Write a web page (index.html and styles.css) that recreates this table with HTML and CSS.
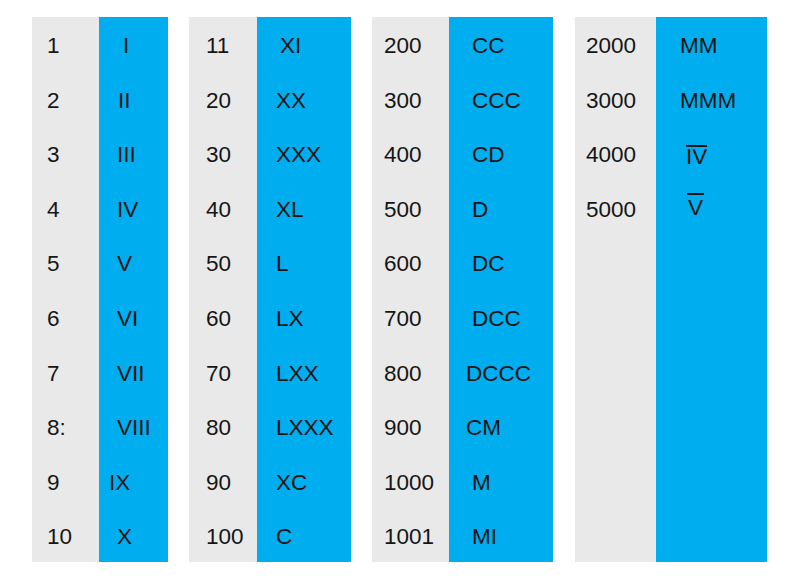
FILE: index.html
```html
<!DOCTYPE html>
<html>
<head>
<meta charset="utf-8">
<link rel="stylesheet" href="styles.css">
</head>
<body>
<div class="board">
  <div class="group g1">
    <div class="strip nums">
      <div class="cell">1</div><div class="cell">2</div><div class="cell">3</div><div class="cell">4</div><div class="cell">5</div>
      <div class="cell">6</div><div class="cell">7</div><div class="cell">8:</div><div class="cell">9</div><div class="cell">10</div>
    </div>
    <div class="strip roman">
      <div class="cell"><span class="n6">I</span></div>
      <div class="cell"><span class="n1">II</span></div>
      <div class="cell">III</div><div class="cell">IV</div><div class="cell">V</div>
      <div class="cell">VI</div><div class="cell">VII</div><div class="cell">VIII</div>
      <div class="cell"><span class="m8">IX</span></div>
      <div class="cell">X</div>
    </div>
  </div>
  <div class="group g2">
    <div class="strip nums">
      <div class="cell">11</div><div class="cell">20</div><div class="cell">30</div><div class="cell">40</div><div class="cell">50</div>
      <div class="cell">60</div><div class="cell">70</div><div class="cell">80</div><div class="cell">90</div><div class="cell">100</div>
    </div>
    <div class="strip roman">
      <div class="cell"><span class="n4">XI</span></div>
      <div class="cell">XX</div><div class="cell">XXX</div><div class="cell">XL</div><div class="cell">L</div>
      <div class="cell">LX</div><div class="cell">LXX</div><div class="cell">LXXX</div><div class="cell">XC</div><div class="cell">C</div>
    </div>
  </div>
  <div class="group g3">
    <div class="strip nums">
      <div class="cell">200</div><div class="cell">300</div><div class="cell">400</div><div class="cell">500</div><div class="cell">600</div>
      <div class="cell">700</div><div class="cell">800</div><div class="cell">900</div><div class="cell">1000</div><div class="cell">1001</div>
    </div>
    <div class="strip roman">
      <div class="cell">CC</div><div class="cell">CCC</div><div class="cell">CD</div><div class="cell">D</div><div class="cell">DC</div>
      <div class="cell">DCC</div>
      <div class="cell"><span class="m6">DCCC</span></div>
      <div class="cell"><span class="m6">CM</span></div>
      <div class="cell">M</div><div class="cell">MI</div>
    </div>
  </div>
  <div class="group g4">
    <div class="strip nums">
      <div class="cell">2000</div><div class="cell">3000</div><div class="cell">4000</div><div class="cell">5000</div>
    </div>
    <div class="strip roman">
      <div class="cell">MM</div><div class="cell">MMM</div>
      <div class="cell"><span class="bar bar-tight n6">IV</span></div>
      <div class="cell"><span class="bar bar-loose n7">V</span></div>
    </div>
  </div>
</div>
</body>
</html>
```
FILE: styles.css
```css
html, body {
  margin: 0;
  padding: 0;
  background: #ffffff;
}

body {
  font-family: "Liberation Sans", Arial, sans-serif;
  font-size: 22.5px;
  color: #151515;
}

.board {
  display: flex;
  padding: 17px 0 0 32px;
  gap: 21px;
}

.group {
  display: flex;
  height: 545px;
}

.strip {
  display: flex;
  flex-direction: column;
  padding-top: 2px;
  box-sizing: border-box;
  overflow: hidden;
}

.nums {
  background: #e9e9e9;
}

.roman {
  background: #00adef;
}

.cell {
  height: 54.55px;
  flex-shrink: 0;
  display: flex;
  align-items: center;
  white-space: nowrap;
}

.g1 .nums { width: 67px; padding-left: 15px; }
.g1 .roman { width: 69px; padding-left: 18px; }
.g2 .nums { width: 68px; padding-left: 17px; }
.g2 .roman { width: 94px; padding-left: 19px; }
.g3 .nums { width: 77px; padding-left: 12px; }
.g3 .roman { width: 104px; padding-left: 23px; }
.g4 { margin-left: 1px; }
.g4 .nums { width: 81px; padding-left: 11px; }
.g4 .roman { width: 111px; padding-left: 24px; }

.n1 { margin-left: 1px; }
.n4 { margin-left: 4px; }
.n6 { margin-left: 6px; }
.n7 { margin-left: 7px; }
.m6 { margin-left: -6px; }
.m8 { margin-left: -8px; }

.bar {
  display: inline-block;
  border-top: 2px solid #151515;
}

.bar-tight {
  line-height: 0.85;
}

.bar-loose {
  line-height: normal;
  padding: 0 1px;
  margin-top: -6px;
}
```
